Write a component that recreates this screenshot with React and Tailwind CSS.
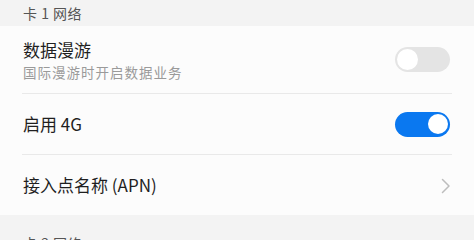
export default function App() {
  const font = { fontFamily: '"Noto Sans CJK SC", "Noto Sans", sans-serif' };
  return (
    <div className="w-[474px] h-[240px] overflow-hidden bg-[#fcfcfc]" style={font}>
      <div className="h-[26px] bg-[#f3f3f3] pl-[23px] flex items-center text-[14px] leading-none text-[#555] tracking-[0.5px]">
        卡 1 网络
      </div>
      <div className="bg-[#fcfcfc]">
        <div className="mx-[22px] h-[68px] border-b border-[#e9e9e9] flex items-center justify-between">
          <div className="flex flex-col pl-[1px]">
            <div className="text-[17px] leading-[22px] text-[#1f1f1f]">数据漫游</div>
            <div className="text-[13.5px] leading-[18px] text-[#9a9a9a] tracking-[1px] mt-[2px]">国际漫游时开启数据业务</div>
          </div>
          <div className="w-[55px] h-[25px] rounded-full bg-[#e4e4e4] flex items-center px-[2px] mr-[2px]">
            <div className="w-[21px] h-[21px] rounded-full bg-white"></div>
          </div>
        </div>
        <div className="mx-[22px] h-[61px] border-b border-[#e9e9e9] flex items-center justify-between">
          <div className="text-[17px] leading-[22px] text-[#1f1f1f] pl-[1px]">启用 4G</div>
          <div className="w-[55px] h-[25px] rounded-full bg-[#0a78f0] flex items-center justify-end px-[2px] mr-[2px]">
            <div className="w-[20px] h-[20px] rounded-full bg-white"></div>
          </div>
        </div>
        <div className="mx-[22px] h-[60px] flex items-center justify-between">
          <div className="text-[17px] leading-[22px] text-[#1f1f1f] pl-[1px]">接入点名称 (APN)</div>
          <svg width="10" height="16" viewBox="0 0 10 16" className="mr-[1px] mt-[1px]">
            <path d="M1.5 1.5 L8 8 L1.5 14.5" fill="none" stroke="#bdbdbd" strokeWidth="1.5" strokeLinecap="round" strokeLinejoin="round" />
          </svg>
        </div>
      </div>
      <div className="h-[40px] bg-[#f3f3f3] pl-[23px] pt-[19px] text-[14px] leading-[18px] text-[#555] tracking-[0.5px]">
        卡 2 网络
      </div>
    </div>
  );
}
